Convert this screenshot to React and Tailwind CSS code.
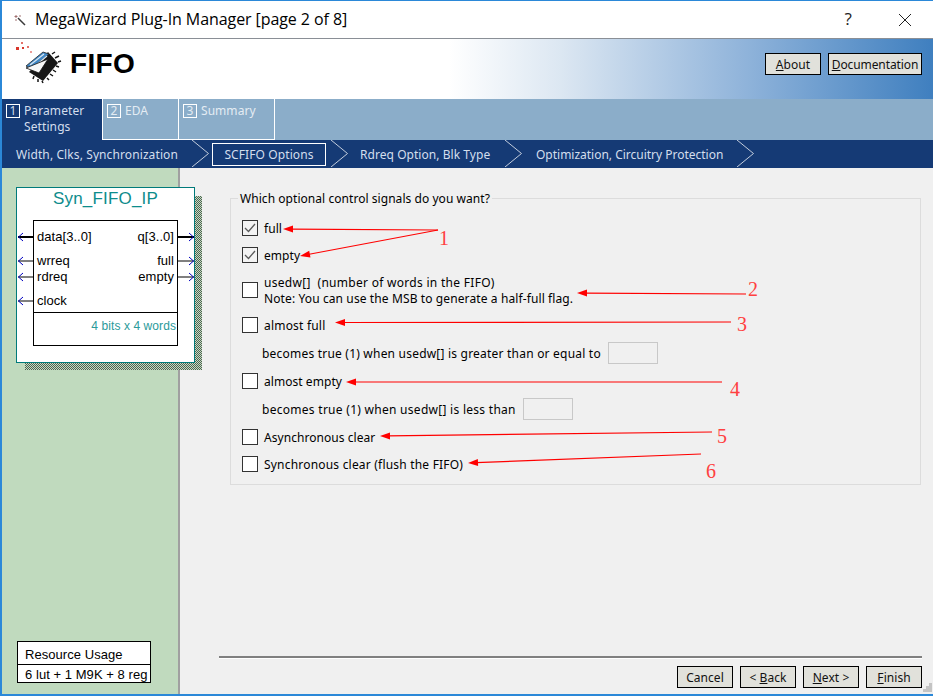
const ui = "font-['Noto_Sans','DejaVu_Sans',sans-serif] text-[12px] leading-[16px] tracking-[0.05px]";
const arial = "font-['Liberation_Sans',Arial,sans-serif]";

function Check({ on }) {
  return (
    <span className={`flex w-4 h-4 shrink-0 items-center justify-center border border-[#333333] ${on ? "bg-[#f3f3f3]" : "bg-white"}`}>
      {on && (
        <svg width="12" height="10" viewBox="0 0 12 10" fill="none">
          <path d="M1 5 L4.5 8.5 L11 1" stroke="#5a5a5a" strokeWidth="1.3" />
        </svg>
      )}
    </span>
  );
}

function Opt({ on, children, className = "", textClass = "" }) {
  return (
    <div className={`flex items-center gap-[6px] text-black ${className}`}>
      <Check on={on} />
      <div className={`translate-y-px ${textClass}`}>{children}</div>
    </div>
  );
}

function Btn({ children, className = "" }) {
  return (
    <div className={`flex h-[22px] items-center justify-center border border-black bg-[#e1e1db] pt-px text-[#111] ${className}`}>
      {children}
    </div>
  );
}

function Chevron() {
  return (
    <svg width="17" height="27" viewBox="0 0 17 27" fill="none" className="shrink-0 self-start">
      <path d="M0 0 L16.5 13.5 L0 27" stroke="#c3cddd" strokeWidth="1" />
    </svg>
  );
}

function NumBox({ n }) {
  return (
    <span className="flex h-[14px] w-[14px] shrink-0 items-center justify-center border border-white text-[12px] leading-none">{n}</span>
  );
}

function Logo() {
  return (
    <svg width="50" height="48" viewBox="0 0 50 48" className="shrink-0">
      <g fill="#d9362b">
        <rect x="1" y="6" width="3" height="3" />
        <rect x="7" y="6" width="2" height="2" />
        <rect x="6" y="1" width="2" height="2" opacity="0.7" />
        <rect x="12" y="5" width="2" height="2" opacity="0.7" />
        <rect x="15" y="10" width="2" height="2" opacity="0.5" />
      </g>
      <path d="M33 11 L43 22 L28 40 L14 31 Z" fill="#161616" />
      <path d="M37 13 L40 11 M40 17 L44 15 M43 21 L46 20 M41 25 L44 26 M38 29 L41 31 M35 33 L38 35 M32 37 L34 39 M27 40 L28 42 M23 38 L23 41 M19 35 L18 38" stroke="#161616" strokeWidth="1.5" />
      <path d="M11 25 L28 11 L34 13 L16 28 Z" fill="#3f87c6" stroke="#222" strokeWidth="0.8" />
      <path d="M15 24 L29 13 M19 26 L32 15" stroke="#dbe8f3" strokeWidth="1.2" />
      <path d="M11 27 L33 18 L24 32 Z" fill="#f8f8f8" stroke="#111" strokeWidth="0.8" />
    </svg>
  );
}

function Symbol() {
  const left = [
    ["data[3..0]", 236],
    ["wrreq", 260],
    ["rdreq", 276],
    ["clock", 300],
  ];
  const right = [
    ["q[3..0]", 236],
    ["full", 260],
    ["empty", 276],
  ];
  return (
    <div className="relative z-10 ml-[14px] mt-[19px] h-[176px] w-[179px]">
      <div className="absolute left-[9px] top-[9px] h-[174px] w-[177px] bg-[repeating-conic-gradient(#4d664f_0_25%,#c6d8c6_0_50%)] bg-[length:2px_2px]" />
      <div className={`relative flex h-full flex-col items-center border border-[#007a7a] bg-white ${arial}`}>
        <div className="mt-[1px] text-[17px] leading-[20px] tracking-[0.2px] text-[#0d8c8c]">Syn_FIFO_IP</div>
        <div className="mt-[11px] flex h-[126px] w-[145px] flex-col border border-black text-[13px] leading-[14px] text-black">
          <div className="flex h-[91px] justify-between px-[3px]">
            <div className="relative w-[70px]">
              {left.map(([t, y]) => (
                <span key={t} className="absolute left-0" style={{ top: y - 227 }}>{t}</span>
              ))}
            </div>
            <div className="relative w-[60px]">
              {right.map(([t, y]) => (
                <span key={t} className="absolute right-0" style={{ top: y - 227 }}>{t}</span>
              ))}
            </div>
          </div>
          <div className="flex-1 border-t border-black pr-[1px] pt-[6px] text-right text-[12px] tracking-[0.08px] text-[#2a9a9a]">4 bits x 4 words</div>
        </div>
        <svg className="absolute left-0 top-0" width="177" height="174" viewBox="0 0 177 174" fill="none">
          {[[49, 3], [73, 1], [89, 1], [113, 1]].map(([y, w]) => (
            <g key={y}>
              <path d={`M1 ${y} H16`} stroke="#000" strokeWidth={w === 3 ? 2 : 1} />
              <path d={`M6 ${y - 4} L1.5 ${y} L6 ${y + 4}`} stroke="#0000c0" strokeWidth="1" />
            </g>
          ))}
          {[[49, 3], [73, 1], [89, 1]].map(([y, w]) => (
            <g key={y}>
              <path d={`M161 ${y} H177`} stroke="#000" strokeWidth={w === 3 ? 2 : 1} />
              <path d={`M172 ${y - 4} L176.5 ${y} L172 ${y + 4}`} stroke="#0000c0" strokeWidth="1" />
            </g>
          ))}
        </svg>
      </div>
    </div>
  );
}

const arrows = [
  [283, 229, 438, 230],
  [300, 256, 438, 230],
  [577, 293, 746, 294],
  [335, 322.5, 731, 322],
  [346, 382, 722, 382],
  [380, 436, 712, 432],
  [468, 463, 701, 454],
];

const digits = [
  ["1", 439, 227],
  ["2", 748, 278],
  ["3", 737, 313],
  ["4", 730, 378],
  ["5", 717, 425],
  ["6", 706, 460],
];

function Annotations() {
  return (
    <>
      <svg className="absolute left-0 top-0 z-20" width="933" height="696" viewBox="0 0 933 696" fill="none">
        {arrows.map(([x1, y1, x2, y2]) => {
          const a = Math.atan2(y2 - y1, x2 - x1);
          const c = Math.cos(a), s = Math.sin(a);
          const bx = x1 + 10 * c, by = y1 + 10 * s;
          return (
            <g key={x1}>
              <path d={`M${x1 + 8 * c} ${y1 + 8 * s} L${x2} ${y2}`} stroke="#ff0000" strokeWidth="1.2" />
              <path d={`M${x1} ${y1} L${bx - 3.5 * s} ${by + 3.5 * c} L${bx + 3.5 * s} ${by - 3.5 * c} Z`} fill="#ff0000" />
            </g>
          );
        })}
      </svg>
      {digits.map(([t, x, y]) => (
        <span key={t} className="absolute z-20 font-['Liberation_Serif',serif] text-[20px] leading-[22px] text-[#ff4040]" style={{ left: x, top: y }}>{t}</span>
      ))}
    </>
  );
}

export default function App() {
  return (
    <div className={`relative flex h-[696px] w-[933px] flex-col overflow-hidden border-b-[2px] border-l-[2px] border-t border-[#2b88d8] bg-[#f0f0f0] ${ui}`}>
      {/* title bar */}
      <div className="flex h-[38px] shrink-0 items-center border-b border-[#8a8f96] bg-white">
        <svg width="12" height="12" viewBox="0 0 12 12" className="ml-[12px] shrink-0" fill="none">
          <path d="M4 4 L11 11" stroke="#3a3a3a" strokeWidth="1.5" />
          <path d="M2 1 V4 M0.5 2.5 H3.5 M6 1 V3 M1 6 H3" stroke="#a07070" strokeWidth="1" />
        </svg>
        <div className="-mt-px ml-[9px] font-['Open_Sans','Noto_Sans',sans-serif] text-[16px] leading-[20px] tracking-[-0.08px] text-black">MegaWizard Plug-In Manager [page 2 of 8]</div>
        <div className="ml-auto flex items-center">
          <span className="-mt-px font-['Open_Sans',sans-serif] text-[17px] leading-[20px] text-[#222]">?</span>
          <svg width="14" height="14" viewBox="0 0 14 14" fill="none" className="ml-[46px] mr-[21px]">
            <path d="M1 1 L13 13 M13 1 L1 13" stroke="#222" strokeWidth="1" />
          </svg>
        </div>
      </div>
      {/* header */}
      <div className="flex h-[60px] shrink-0 bg-[linear-gradient(90deg,#ffffff_0%,#ffffff_48%,#dce7f2_60%,#8fb3da_80%,#3f7fbf_100%)]">
        <div className="ml-[13px] mt-[2px]"><Logo /></div>
        <div className={`ml-[5px] mt-[8px] ${arial} text-[28px] font-bold leading-[34px] tracking-[0.3px] text-black`}>FIFO</div>
        <div className="ml-auto mr-[11px] mt-[14px] flex gap-[7px]">
          <Btn className="w-[56px]"><span><u>A</u>bout</span></Btn>
          <Btn className="w-[94px]"><span className="tracking-[-0.1px]"><u>D</u>ocumentation</span></Btn>
        </div>
      </div>
      {/* tabs */}
      <div className="flex h-[41px] shrink-0 bg-[#8badc9]">
        <div className="flex h-[41px] w-[100px] gap-[4px] bg-[#153a75] pl-[4px] pt-[5px] tracking-[0.1px] text-[#d3deed]">
          <NumBox n="1" />
          <div className="-mt-px">Parameter<br />Settings</div>
        </div>
        <div className="flex h-[41px] w-[77px] gap-[4px] border-x border-b border-white pl-[4px] pt-[5px] text-[#e4ecf3]">
          <NumBox n="2" />
          <div className="-mt-px">EDA</div>
        </div>
        <div className="-ml-px flex h-[41px] w-[97px] gap-[4px] border-x border-b border-white pl-[4px] pt-[5px] text-[#e4ecf3]">
          <NumBox n="3" />
          <div className="-mt-px">Summary</div>
        </div>
      </div>
      {/* step bar */}
      <div className="flex h-[28px] shrink-0 items-center bg-[#153a75] text-[#d3deed]">
        <div className="w-[190px] pl-[14px] pt-px tracking-[0.1px]">Width, Clks, Synchronization</div>
        <Chevron />
        <div className="ml-[3px] flex h-[23px] w-[114px] items-center justify-center border border-white pt-px tracking-[0.1px]">SCFIFO Options</div>
        <div className="w-[5px]" />
        <Chevron />
        <div className="w-[157px] pl-[12px] pt-px">Rdreq Option, Blk Type</div>
        <Chevron />
        <div className="w-[215px] pl-[14px] pt-px tracking-[-0.01px]">Optimization, Circuitry Protection</div>
        <Chevron />
      </div>
      {/* body */}
      <div className="flex min-h-0 flex-1">
        <div className="flex w-[178px] shrink-0 flex-col border-r-2 border-[#a0a0a0] bg-[#c0dabe]">
          <Symbol />
          <div className={`relative z-10 ml-[15px] mb-[11px] mt-auto w-[134px] border border-black bg-white text-[13px] leading-[14px] text-black ${arial}`}>
            <div className="h-[23px] border-b border-black pl-[7px] pt-[6px]">Resource Usage</div>
            <div className="h-[17px] overflow-hidden pl-[7px] pt-[3px] whitespace-nowrap">6 lut + 1 M9K + 8 reg</div>
          </div>
        </div>
        <div className="flex min-w-0 flex-1 flex-col">
          <div className="relative ml-[50px] mt-[30px] h-[287px] w-[691px] border border-[#dcdcdc] pl-[11px] pt-[21px]">
            <div className="absolute left-[7px] top-[-8px] bg-[#f0f0f0] px-[2px] tracking-[0.05px] text-black">Which optional control signals do you want?</div>
            <Opt on>full</Opt>
            <Opt on className="mt-[11px]">empty</Opt>
            <Opt className="mt-[11px]">
              <span className="tracking-[0.29px]">usedw[]&nbsp; (number of words in the FIFO)</span><br />
              <span className="tracking-[0.11px]">Note: You can use the MSB to generate a half-full flag.</span>
            </Opt>
            <Opt className="mt-[11px]" textClass="tracking-[0.2px]">almost full</Opt>
            <div className="ml-[20px] mt-[9px] flex h-[22px] items-center gap-[7px] text-black">
              <span className="translate-y-px tracking-[0.21px]">becomes true (1) when usedw[] is greater than or equal to</span>
              <div className="h-[22px] w-[50px] border border-[#c8c8c8] bg-[#f0f0f0]" />
            </div>
            <Opt className="mt-[9px]">almost empty</Opt>
            <div className="ml-[20px] mt-[9px] flex h-[22px] items-center gap-[7px] text-black">
              <span className="translate-y-px tracking-[0.28px]">becomes true (1) when usedw[] is less than</span>
              <div className="h-[22px] w-[50px] border border-[#c8c8c8] bg-[#f0f0f0]" />
            </div>
            <Opt className="mt-[9px]" textClass="tracking-[0.05px]">Asynchronous clear</Opt>
            <Opt className="mt-[11px]" textClass="tracking-[0.2px]">Synchronous clear (flush the FIFO)</Opt>
          </div>
          <div className="mb-[6px] ml-[39px] mr-[11px] mt-auto">
            <div className="h-[3px] border-t-2 border-b border-t-[#808080] border-b-white" />
            <div className="mt-[7px] flex justify-end gap-[7px]">
              <Btn className="w-[56px]">Cancel</Btn>
              <Btn className="w-[56px]"><span>&lt; <u>B</u>ack</span></Btn>
              <Btn className="w-[56px]"><span><u>N</u>ext &gt;</span></Btn>
              <Btn className="w-[56px]"><span><u>F</u>inish</span></Btn>
            </div>
          </div>
        </div>
      </div>
      <svg className="absolute bottom-[1px] right-0" width="10" height="10" viewBox="0 0 10 10" fill="#c4c4c4">
        <rect x="6" y="0" width="3" height="3" />
        <rect x="3" y="3" width="3" height="3" />
        <rect x="6" y="3" width="3" height="3" />
        <rect x="0" y="6" width="3" height="3" />
        <rect x="3" y="6" width="3" height="3" />
        <rect x="6" y="6" width="3" height="3" />
      </svg>
      <div className="absolute -left-[2px] -top-px">
        <Annotations />
      </div>
    </div>
  );
}
